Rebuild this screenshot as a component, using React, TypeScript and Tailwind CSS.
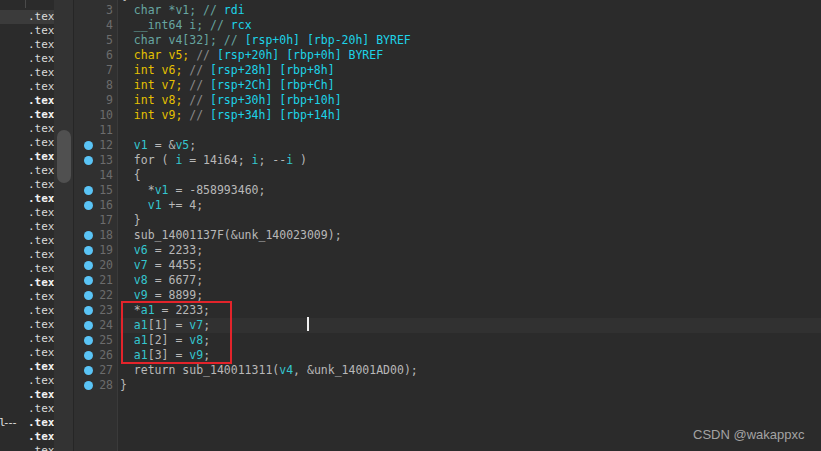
import React from "react";

const T = "#b8b8b8";
const D = "#67a6a1";
const Y = "#e6c100";
const C = "#1dd3e8";
const V = "#34c6cf";
const G = "#8c8c8c";

type Tok = [string, string];

const LINES: { n: number; toks: Tok[]; dot?: boolean }[] = [
  { n: 2, toks: [["{", T]] },
  { n: 3, toks: [["  char *v1; // ", D], ["rdi", C]] },
  { n: 4, toks: [["  __int64 i; // ", D], ["rcx", C]] },
  { n: 5, toks: [["  char v4[32]; // ", D], ["[rsp+0h] [rbp-20h] BYREF", C]] },
  { n: 6, toks: [["  char v5;", Y], [" //", G], [" [rsp+20h] [rbp+0h] BYREF", C]] },
  { n: 7, toks: [["  int v6;", Y], [" //", G], [" [rsp+28h] [rbp+8h]", C]] },
  { n: 8, toks: [["  int v7;", Y], [" //", G], [" [rsp+2Ch] [rbp+Ch]", C]] },
  { n: 9, toks: [["  int v8;", Y], [" //", G], [" [rsp+30h] [rbp+10h]", C]] },
  { n: 10, toks: [["  int v9;", Y], [" //", G], [" [rsp+34h] [rbp+14h]", C]] },
  { n: 11, toks: [] },
  { n: 12, dot: true, toks: [["  ", T], ["v1", V], [" = &", T], ["v5", V], [";", T]] },
  {
    n: 13,
    dot: true,
    toks: [["  for ( ", T], ["i", V], [" = 14i64; ", T], ["i", V], ["; --", T], ["i", V], [" )", T]],
  },
  { n: 14, toks: [["  {", T]] },
  { n: 15, dot: true, toks: [["    *", T], ["v1", V], [" = -858993460;", T]] },
  { n: 16, dot: true, toks: [["    ", T], ["v1", V], [" += 4;", T]] },
  { n: 17, toks: [["  }", T]] },
  { n: 18, dot: true, toks: [["  sub_14001137F(&unk_140023009);", T]] },
  { n: 19, dot: true, toks: [["  ", T], ["v6", V], [" = 2233;", T]] },
  { n: 20, dot: true, toks: [["  ", T], ["v7", V], [" = 4455;", T]] },
  { n: 21, dot: true, toks: [["  ", T], ["v8", V], [" = 6677;", T]] },
  { n: 22, dot: true, toks: [["  ", T], ["v9", V], [" = 8899;", T]] },
  { n: 23, dot: true, toks: [["  *", T], ["a1", V], [" = 2233;", T]] },
  { n: 24, dot: true, toks: [["  ", T], ["a1", V], ["[1] = ", T], ["v7", V], [";", T]] },
  { n: 25, dot: true, toks: [["  ", T], ["a1", V], ["[2] = ", T], ["v8", V], [";", T]] },
  { n: 26, dot: true, toks: [["  ", T], ["a1", V], ["[3] = ", T], ["v9", V], [";", T]] },
  {
    n: 27,
    dot: true,
    toks: [["  return sub_140011311(", T], ["v4", V], [", &unk_14001AD00);", T]],
  },
  { n: 28, dot: true, toks: [["}", T]] },
];

const BOLD = [6, 7, 10, 13, 19, 25, 27, 29, 30];

export default function App() {
  const rows = Array.from({ length: 32 }, (_, i) => i);
  return (
    <div
      className="relative flex h-[451px] w-[821px] overflow-hidden bg-[#2b2b2b]"
      style={{ fontFamily: "'DejaVu Sans Mono', monospace" }}
    >
      {/* segment list */}
      <div className="flex w-[54px] shrink-0 flex-col overflow-hidden bg-[#2b2b2b] text-[11px]">
        <div className="flex h-[10px] shrink-0">
          <div className="h-[8px] w-[26px] border-r border-[#4a4a4a]" />
        </div>
        {rows.map((i) => (
          <div
            key={i}
            className={`flex h-[14px] shrink-0 items-center whitespace-nowrap leading-[14px] ${
              i === 0 ? "bg-[#3b3b3b]" : ""
            }`}
          >
            <div className="w-[28px] shrink-0 overflow-hidden text-[#e0e0e0]">
              {i === 29 ? <span className="ml-[-1px] tracking-[-2.5px]">l---</span> : null}
            </div>
            <span
              className={BOLD.includes(i) ? "font-bold text-[#f2f2f2]" : "text-[#dcdcdc]"}
            >
              .text
            </span>
          </div>
        ))}
      </div>

      {/* scroll column */}
      <div className="flex w-[20px] shrink-0 justify-center bg-[#333333] border-r border-[#262626]">
        <div className="mt-[130px] h-[53px] w-[14px] rounded-full bg-[#505050]" />
      </div>

      {/* gutter */}
      <div className="flex w-[44px] shrink-0 flex-col bg-[#303030] border-r border-[#3a3a3a] mt-[-12.5px] text-[11.5px]">
        {LINES.map((l) => (
          <div key={l.n} className="flex h-[15px] shrink-0 items-center leading-[15px]">
            <div className="flex w-[28px] justify-center">
              {l.dot ? <div className="h-[9px] w-[9px] rounded-full bg-[#5ac4f6]" /> : null}
            </div>
            <div className="w-[11px] text-right text-[#6c6c6c] whitespace-nowrap flex justify-end">
              {l.n}
            </div>
          </div>
        ))}
      </div>

      {/* code */}
      <div className="relative flex-1 text-[11.5px]">
        <div className="mt-[-12.5px] flex flex-col pl-[2px]">
          {LINES.map((l) => (
            <div
              key={l.n}
              className={`h-[15px] shrink-0 whitespace-pre leading-[15px] ${
                l.n === 24 ? "bg-[#313131]" : ""
              }`}
            >
              {l.toks.map((t, j) => (
                <span key={j} style={{ color: t[1] }}>
                  {t[0]}
                </span>
              ))}
            </div>
          ))}
        </div>
        <div className="absolute left-[3px] top-[301px] h-[63px] w-[111px] border-2 border-[#e3242b]" />
        <div className="absolute left-[189px] top-[317px] h-[14px] w-[2px] bg-[#f0f0f0]" />
      </div>

      <div
        className="absolute left-[693px] top-[425px] text-[13px] text-[#a3a3a3]"
        style={{ fontFamily: "'Liberation Sans', Arial, sans-serif" }}
      >
        CSDN @wakappxc
      </div>
    </div>
  );
}
